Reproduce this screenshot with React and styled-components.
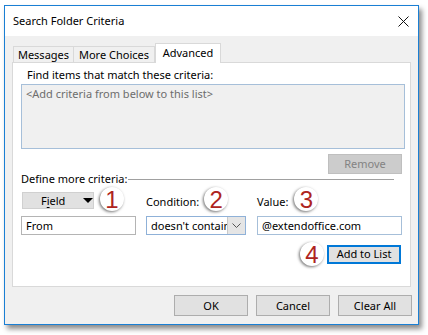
import styled, { createGlobalStyle } from 'styled-components'

const GlobalStyle = createGlobalStyle`
  html, body {
    margin: 0;
    padding: 0;
    background: #ffffff;
  }
  body {
    font-family: 'Noto Sans', 'Open Sans', sans-serif;
    font-size: 11px;
    color: #000000;
  }
`

const Page = styled.div`
  padding: 5px 0 0 4px;
  height: 335px;
  box-sizing: border-box;
`

const Dialog = styled.div`
  width: 415px;
  height: 320px;
  box-sizing: border-box;
  border: 1px solid #1a7fd4;
  background: #f0f0f0;
  box-shadow: 3px 4px 5px rgba(0, 0, 0, 0.45);
  display: flex;
  flex-direction: column;
`

const TitleBar = styled.div`
  height: 30px;
  flex-shrink: 0;
  background: #ffffff;
  display: flex;
  align-items: center;
  justify-content: space-between;
  padding: 0 9px 0 8px;
`

const Title = styled.span`
  font-size: 11px;
  line-height: 16px;
  padding-bottom: 1px;
`

const CloseIcon = styled.svg`
  width: 11px;
  height: 11px;
  display: block;
`

const Body = styled.div`
  padding: 7px 7px 0 7px;
  display: flex;
  flex-direction: column;
`

const TabStrip = styled.div`
  height: 19px;
  display: flex;
  align-items: flex-end;
  padding-left: 1px;
`

const Tab = styled.div`
  box-sizing: border-box;
  width: ${(p) => p.$width}px;
  height: ${(p) => (p.$active ? 20 : 16)}px;
  border: 1px solid #d9d9d9;
  border-bottom: none;
  margin-left: ${(p) => (p.$active ? 0 : -1)}px;
  margin-bottom: ${(p) => (p.$active ? -1 : 0)}px;
  background: ${(p) => (p.$active ? '#ffffff' : '#f0f0f0')};
  position: relative;
  z-index: ${(p) => (p.$active ? 1 : 0)};
  display: flex;
  align-items: ${(p) => (p.$active ? 'flex-start' : 'center')};
  justify-content: center;
  line-height: 16px;
  padding-top: ${(p) => (p.$active ? 1 : 0)}px;

  &:first-child {
    margin-left: 0;
  }
`

const Panel = styled.div`
  box-sizing: border-box;
  height: 225px;
  background: #ffffff;
  border: 1px solid #d9d9d9;
  padding: 4px 5px 0 8px;
  display: flex;
  flex-direction: column;
`

const SectionLabel = styled.div`
  line-height: 16px;
  margin-left: 6px;
  height: 17px;
`

const CriteriaList = styled.div`
  box-sizing: border-box;
  height: 65px;
  width: 384px;
  border: 1px solid #a6bfd9;
  background: #f0f0f0;
  color: #6d6d6d;
  padding: 1px 4px;
  line-height: 16px;
`

const RightRow = styled.div`
  display: flex;
  justify-content: flex-end;
  align-items: center;
  gap: 3px;
  margin-top: ${(p) => p.$top || 0}px;
  margin-right: ${(p) => p.$right || 0}px;
`

const Button = styled.div`
  box-sizing: border-box;
  width: ${(p) => p.$width || 74}px;
  height: ${(p) => p.$height || 20}px;
  background: ${(p) => (p.$disabled ? '#cccccc' : '#e1e1e1')};
  border: ${(p) =>
    p.$default ? '2px solid #0078d7' : `1px solid ${p.$disabled ? '#bfbfbf' : '#adadad'}`};
  color: ${(p) => (p.$disabled ? '#838383' : '#000000')};
  display: flex;
  align-items: center;
  justify-content: center;
  line-height: 16px;
`

const Divider = styled.div`
  display: flex;
  align-items: center;
  margin-top: -2px;
  line-height: 14px;
  margin-right: 11px;
`

const Rule = styled.div`
  flex: 1;
  height: 1px;
  background: #a0a0a0;
  margin-left: 1px;
`

const CriteriaGrid = styled.div`
  display: grid;
  grid-template-columns: 115px 100px 146px;
  column-gap: 10px;
  margin-top: 1px;
`

const HeadCell = styled.div`
  height: 24px;
  display: flex;
  align-items: flex-end;
  margin-left: ${(p) => p.$shift || 0}px;
`

const FieldButton = styled.div`
  box-sizing: border-box;
  width: 72px;
  height: 17px;
  margin-left: 1px;
  margin-bottom: 2px;
  background: #e1e1e1;
  border: 1px solid #d0d0d0;
  display: flex;
  align-items: center;
  padding-left: 18px;
  line-height: 15px;
`

const Accel = styled.span`
  text-decoration: underline;
  text-underline-offset: 2px;
`

const Caret = styled.span`
  width: 0;
  height: 0;
  border-left: 5px solid transparent;
  border-right: 5px solid transparent;
  border-top: 5px solid #000000;
  margin-left: 18px;
`

const Label = styled.span`
  line-height: 16px;
  padding-bottom: 1px;
`

const Badge = styled.div`
  width: 24px;
  height: 24px;
  flex-shrink: 0;
  border-radius: 50%;
  background: #ffffff;
  box-shadow: -1px 1px 3px rgba(0, 0, 0, 0.55);
  color: #ae2420;
  font-family: 'Liberation Sans', Arial, sans-serif;
  font-size: 24px;
  line-height: 25px;
  text-align: center;
  margin-left: ${(p) => p.$gap || 0}px;
  align-self: flex-start;
`

const Input = styled.div`
  box-sizing: border-box;
  height: 19px;
  margin-top: 5px;
  border: 1px solid ${(p) => p.$border || '#b4b4b4'};
  background: #ffffff;
  display: flex;
  align-items: center;
  padding-left: 4px;
  line-height: 16px;
  overflow: hidden;
  white-space: nowrap;
  margin-left: ${(p) => p.$shift || 0}px;
`

const SelectText = styled.span`
  flex: 1;
  overflow: hidden;
`

const SelectArrow = styled.div`
  width: 17px;
  height: 100%;
  flex-shrink: 0;
  background: #e5e5e5;
  border-left: 1px solid #c9c9c9;
  display: flex;
  align-items: center;
  justify-content: center;
`

const ActionRow = styled.div`
  grid-column: 1 / -1;
  display: flex;
  justify-content: flex-end;
  align-items: center;
  gap: 3px;
  margin-top: 7px;
  margin-right: 1px;
`

const Footer = styled.div`
  display: flex;
  justify-content: flex-end;
  gap: 8px;
  margin-top: 8px;
  margin-right: -1px;
`

export default function App() {
  return (
    <Page>
      <GlobalStyle />
      <Dialog>
        <TitleBar>
          <Title>Search Folder Criteria</Title>
          <CloseIcon viewBox='0 0 11 11'>
            <path d='M0.5 0.5 L10.5 10.5 M10.5 0.5 L0.5 10.5' stroke='#111' strokeWidth='1' />
          </CloseIcon>
        </TitleBar>
        <Body>
          <TabStrip>
            <Tab $width={61}>Messages</Tab>
            <Tab $width={82}>More Choices</Tab>
            <Tab $width={66} $active>
              Advanced
            </Tab>
          </TabStrip>
          <Panel>
            <SectionLabel>Find items that match these criteria:</SectionLabel>
            <CriteriaList>&lt;Add criteria from below to this list&gt;</CriteriaList>
            <RightRow $top={5} $right={3}>
              <Button $disabled>Remove</Button>
            </RightRow>
            <Divider>
              Define more criteria:
              <Rule />
            </Divider>
            <CriteriaGrid>
              <HeadCell>
                <FieldButton>
                  F<Accel>i</Accel>eld
                  <Caret />
                </FieldButton>
                <Badge $gap={6}>1</Badge>
              </HeadCell>
              <HeadCell>
                <Label>Condition:</Label>
                <Badge $gap={5}>2</Badge>
              </HeadCell>
              <HeadCell $shift={1}>
                <Label>Value:</Label>
                <Badge $gap={6}>3</Badge>
              </HeadCell>
              <Input>From</Input>
              <Input $border='#8fb1d8' style={{ paddingRight: 0 }}>
                <SelectText>doesn't contain</SelectText>
                <SelectArrow>
                  <svg width='9' height='6' viewBox='0 0 9 6'>
                    <path d='M0.5 0.5 L4.5 4.5 L8.5 0.5' fill='none' stroke='#555' />
                  </svg>
                </SelectArrow>
              </Input>
              <Input $border='#a6bfd9' $shift={1}>
                @extendoffice.com
              </Input>
              <ActionRow>
                <Badge>4</Badge>
                <Button $default $height={19}>
                  Add to List
                </Button>
              </ActionRow>
            </CriteriaGrid>
          </Panel>
          <Footer>
            <Button $height={21}>OK</Button>
            <Button $height={21}>Cancel</Button>
            <Button $height={21}>Clear All</Button>
          </Footer>
        </Body>
      </Dialog>
    </Page>
  )
}
